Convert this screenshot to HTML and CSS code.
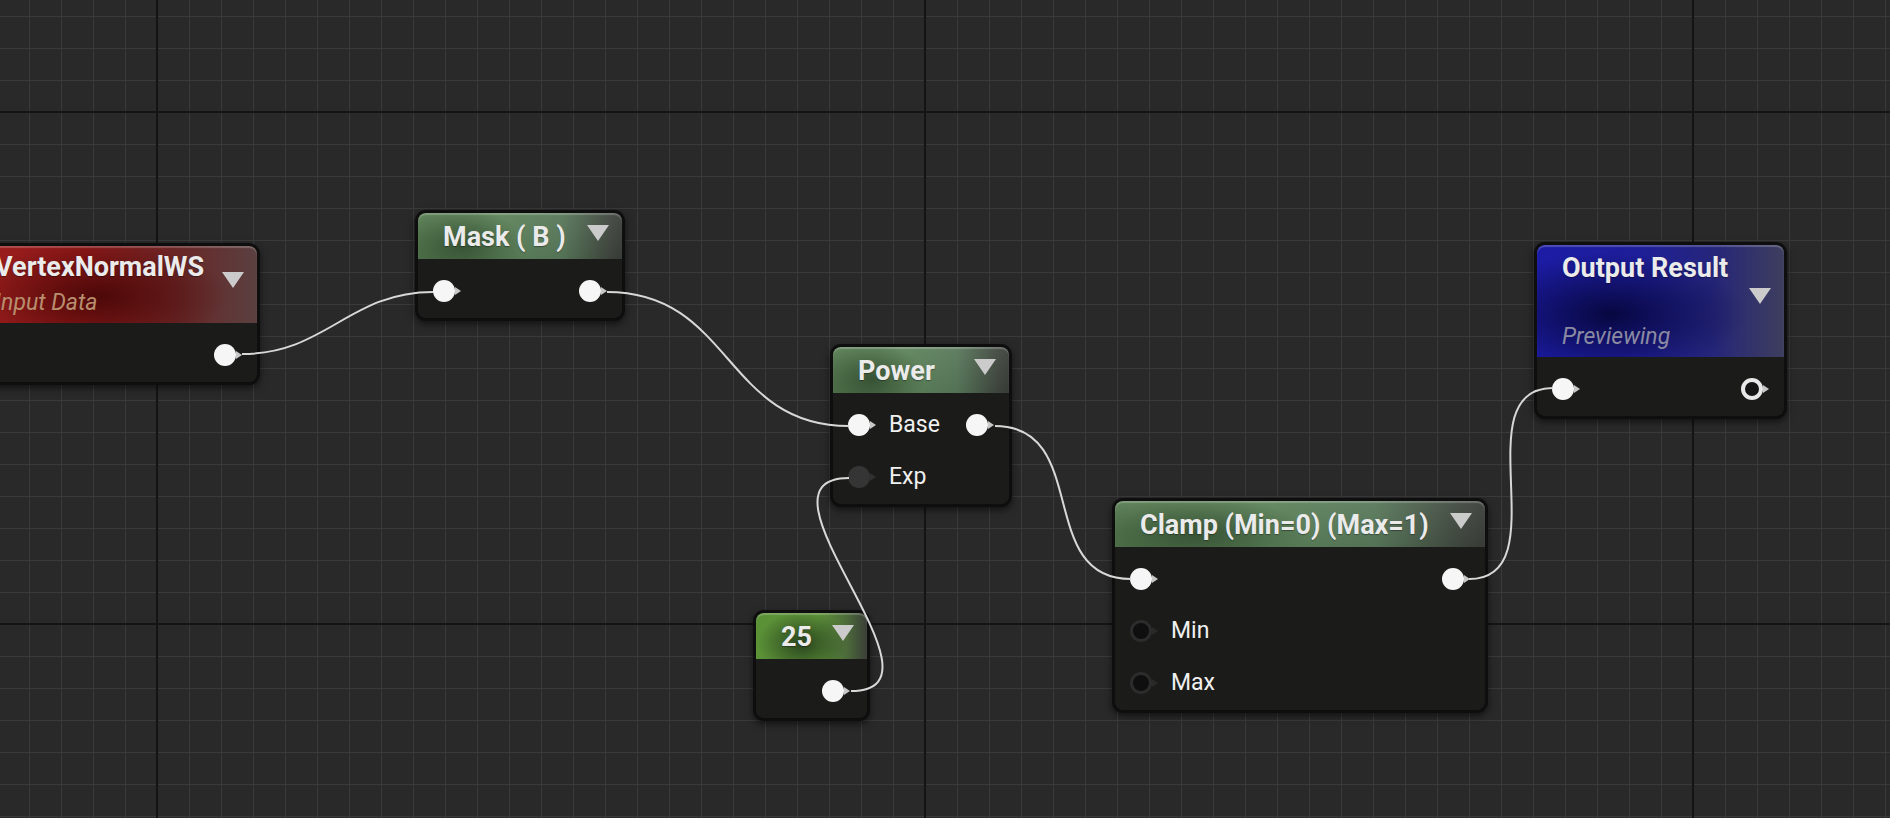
FILE: index.html
```html
<!DOCTYPE html>
<html>
<head>
<meta charset="utf-8">
<title>Material Graph</title>
<link rel="stylesheet" href="styles.css">
</head>
<body>
<div class="canvas">

  <!-- VertexNormalWS -->
  <div class="node n-red">
    <div class="hdr hdr-red">
      <div class="hcol">
        <div class="title">VertexNormalWS</div>
        <div class="sub sub-red">Input Data</div>
      </div>
      <svg class="tri tri-red" viewBox="0 0 22 16"><polygon points="0,0 22,0 11,16"/></svg>
    </div>
    <div class="body">
      <div class="row">
        <span class="spacer"></span>
        <svg class="pin" viewBox="0 0 28 24"><circle class="pc" cx="11" cy="12" r="11"/><polygon class="pa" points="22,8 28,12 22,16"/></svg>
      </div>
    </div>
  </div>

  <!-- Mask ( B ) -->
  <div class="node n-mask">
    <div class="hdr hdr-green">
      <div class="title">Mask ( B )</div>
      <svg class="tri" viewBox="0 0 22 16"><polygon points="0,0 22,0 11,16"/></svg>
    </div>
    <div class="body">
      <div class="row">
        <svg class="pin" viewBox="0 0 28 24"><circle class="pc" cx="11" cy="12" r="11"/><polygon class="pa" points="22,8 28,12 22,16"/></svg>
        <span class="spacer"></span>
        <svg class="pin" viewBox="0 0 28 24"><circle class="pc" cx="11" cy="12" r="11"/><polygon class="pa" points="22,8 28,12 22,16"/></svg>
      </div>
    </div>
  </div>

  <!-- Power -->
  <div class="node n-power">
    <div class="hdr hdr-green">
      <div class="title">Power</div>
      <svg class="tri" viewBox="0 0 22 16"><polygon points="0,0 22,0 11,16"/></svg>
    </div>
    <div class="body">
      <div class="row">
        <svg class="pin" viewBox="0 0 28 24"><circle class="pc" cx="11" cy="12" r="11"/><polygon class="pa" points="22,8 28,12 22,16"/></svg>
        <span class="label">Base</span>
        <span class="spacer"></span>
        <svg class="pin" viewBox="0 0 28 24"><circle class="pc" cx="11" cy="12" r="11"/><polygon class="pa" points="22,8 28,12 22,16"/></svg>
      </div>
      <div class="row">
        <svg class="pin" viewBox="0 0 28 24"><circle class="pc-dim" cx="11" cy="12" r="11"/><polygon class="pa-dim" points="22,8 28,12 22,16"/></svg>
        <span class="label">Exp</span>
      </div>
    </div>
  </div>

  <!-- 25 -->
  <div class="node n-const">
    <div class="hdr hdr-const">
      <div class="title">25</div>
      <svg class="tri" viewBox="0 0 22 16"><polygon points="0,0 22,0 11,16"/></svg>
    </div>
    <div class="body body-const">
      <div class="row">
        <span class="spacer"></span>
        <svg class="pin" viewBox="0 0 28 24"><circle class="pc" cx="11" cy="12" r="11"/><polygon class="pa" points="22,8 28,12 22,16"/></svg>
      </div>
    </div>
  </div>

  <!-- Clamp -->
  <div class="node n-clamp">
    <div class="hdr hdr-green">
      <div class="title">Clamp (Min=0) (Max=1)</div>
      <svg class="tri" viewBox="0 0 22 16"><polygon points="0,0 22,0 11,16"/></svg>
    </div>
    <div class="body">
      <div class="row">
        <svg class="pin" viewBox="0 0 28 24"><circle class="pc" cx="11" cy="12" r="11"/><polygon class="pa" points="22,8 28,12 22,16"/></svg>
        <span class="spacer"></span>
        <svg class="pin" viewBox="0 0 28 24"><circle class="pc" cx="11" cy="12" r="11"/><polygon class="pa" points="22,8 28,12 22,16"/></svg>
      </div>
      <div class="row">
        <svg class="pin" viewBox="0 0 28 24"><circle class="pc-ring" cx="11" cy="12" r="9.5"/><polygon class="pa-ring" points="22,8 28,12 22,16"/></svg>
        <span class="label">Min</span>
      </div>
      <div class="row">
        <svg class="pin" viewBox="0 0 28 24"><circle class="pc-ring" cx="11" cy="12" r="9.5"/><polygon class="pa-ring" points="22,8 28,12 22,16"/></svg>
        <span class="label">Max</span>
      </div>
    </div>
  </div>

  <!-- Output Result -->
  <div class="node n-out">
    <div class="hdr hdr-blue">
      <div class="hcol grow">
        <div class="title">Output Result</div>
        <div class="trirow"><svg class="tri" viewBox="0 0 22 16"><polygon points="0,0 22,0 11,16"/></svg></div>
        <div class="sub sub-blue">Previewing</div>
      </div>
    </div>
    <div class="body">
      <div class="row">
        <svg class="pin" viewBox="0 0 28 24"><circle class="pc" cx="11" cy="12" r="11"/><polygon class="pa" points="22,8 28,12 22,16"/></svg>
        <span class="spacer"></span>
        <svg class="pin" viewBox="0 0 28 24"><circle class="pc-wring" cx="11" cy="12" r="9"/><polygon class="pa" points="22,8 28,12 22,16"/></svg>
      </div>
    </div>
  </div>

  <svg class="wires" viewBox="0 0 1890 818">
    <path d="M242,354 C326,354 349,292 433,292"/>
    <path d="M607,292 C732,292 724,426 849,426"/>
    <path d="M995,426 C1091,426 1035,579 1131,579"/>
    <path d="M1469,579 C1560,579 1462,388 1553,388"/>
    <path d="M851,691 C961,691 739,478 849,478"/>
  </svg>
</div>
</body>
</html>
```

FILE: styles.css
```css
html, body {
  margin: 0;
  padding: 0;
  background: #292929;
}

.canvas {
  position: relative;
  width: 1890px;
  height: 818px;
  overflow: hidden;
  font-family: Roboto, "Noto Sans", "Liberation Sans", sans-serif;
  background-color: #292929;
  background-image:
    linear-gradient(90deg, #141414 0, #141414 2px, transparent 2px),
    linear-gradient(180deg, #141414 0, #141414 2px, transparent 2px),
    linear-gradient(90deg, #3a3a3a 0, #3a3a3a 1px, transparent 1px),
    linear-gradient(180deg, #3a3a3a 0, #3a3a3a 1px, transparent 1px);
  background-size: 768px 100%, 100% 512px, 32px 32px, 32px 32px;
  background-position: 156px 0, 0 111px, 29px 0, 0 16px;
}

/* ---------- nodes ---------- */
.node {
  position: absolute;
  background: #1b1c1a;
  border: 3px solid #0e0e0e;
  border-radius: 11px;
  box-shadow: 0 3px 7px rgba(0, 0, 0, 0.55);
  color: #e8e8e8;
  z-index: 1;
}

.n-red   { left: -33px;  top: 243px; width: 287px; }
.n-mask  { left: 415px;  top: 210px; width: 204px; }
.n-power { left: 830px;  top: 344px; width: 176px; }
.n-const { left: 753px;  top: 610px; width: 111px; }
.n-clamp { left: 1112px; top: 498px; width: 370px; }
.n-out   { left: 1534px; top: 242px; width: 247px; }

.hdr {
  display: flex;
  align-items: flex-start;
  padding: 8px 13px 6px 25px;
  border-radius: 8px 8px 0 0;
  box-shadow: inset 0 2px 1px rgba(255, 255, 255, 0.22);
}

.hcol {
  display: flex;
  flex-direction: column;
  flex: 1;
  min-width: 0;
}

.title {
  flex: 1;
  font-size: 27px;
  font-weight: 700;
  line-height: 32px;
  white-space: nowrap;
  color: #ebebeb;
  text-shadow: 0 1px 1px rgba(0, 0, 0, 0.35);
}

.sub {
  font-size: 23px;
  font-style: italic;
  line-height: 28px;
  white-space: nowrap;
}

.sub-red  { margin-top: 6px; color: #b88e6e; }
.sub-blue { margin-top: 22px; color: #8a8aa2; }

.tri {
  flex: none;
  width: 22px;
  height: 16px;
  margin-top: 4px;
}
.tri polygon { fill: #cbcbcb; }

.tri-red { margin-top: 21px; }

.trirow {
  display: flex;
  justify-content: flex-end;
  height: 17px;
}
.trirow .tri { margin-top: 4px; }

/* header colours */
.hdr-green {
  background:
    radial-gradient(ellipse 30% 80% at 22% 70%, rgba(28, 48, 26, 0.55), rgba(28, 48, 26, 0) 100%),
    linear-gradient(180deg, rgba(255, 255, 255, 0.06), rgba(0, 0, 0, 0.05)),
    linear-gradient(90deg, #557a50 0%, #5d845a 40%, #58785a 70%, #414a40 92%, #3a3d39 100%);
}

.hdr-const {
  background:
    radial-gradient(ellipse 40% 70% at 42% 65%, rgba(30, 52, 24, 0.85), rgba(30, 52, 24, 0) 100%),
    linear-gradient(90deg, #5a9036 0%, #5f953a 55%, #4c6a3a 82%, #3a3e38 100%);
}

.hdr-red {
  padding: 5px 13px 6px 25px;
  background:
    radial-gradient(ellipse 45% 70% at 45% 65%, rgba(70, 6, 6, 0.9), rgba(70, 6, 6, 0) 100%),
    linear-gradient(90deg, #9c1e1e 0%, #8e1818 40%, #6a2626 72%, #5a4040 100%);
}

.hdr-blue {
  padding: 7px 13px 6px 25px;
  background:
    radial-gradient(ellipse 55% 55% at 30% 62%, rgba(6, 6, 60, 0.95), rgba(6, 6, 60, 0) 100%),
    linear-gradient(90deg, #1c1ca6 0%, #1e1e9a 40%, #26267a 72%, #3e3e5e 100%);
}

/* ---------- body ---------- */
.body {
  padding: 6px 15px 1px;
}

.body-const { padding-right: 17px; }

.row {
  display: flex;
  align-items: center;
  height: 52px;
}

.spacer { flex: 1; }

.label {
  margin-left: 13px;
  font-size: 23px;
  line-height: 28px;
  color: #f0f0f0;
}

.pin {
  flex: none;
  width: 28px;
  height: 24px;
}

.pc      { fill: #f6f6f6; }
.pa      { fill: #c8c8c8; }
.pc-dim  { fill: #353535; }
.pa-dim  { fill: #303030; }
.pc-ring { fill: #0f0f0f; stroke: #2c2c2c; stroke-width: 3; }
.pa-ring { fill: #2a2a2a; }
.pc-wring { fill: #151515; stroke: #e8e8e8; stroke-width: 4; }

/* ---------- wires ---------- */
.wires {
  position: absolute;
  left: 0;
  top: 0;
  width: 1890px;
  height: 818px;
  z-index: 2;
  pointer-events: none;
}

.wires path {
  fill: none;
  stroke: #d8d8d8;
  stroke-width: 2;
}
```
